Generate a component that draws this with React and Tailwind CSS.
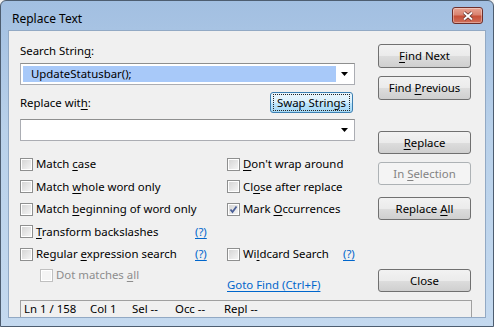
import React from "react";

const font = { fontFamily: '"Noto Sans", "Segoe UI", sans-serif' };

const U = ({ children }) => <span className="underline underline-offset-2">{children}</span>;

const Button = ({ children, className = "", disabled, focused }) => {
  let look =
    "border-[#707070] text-black bg-[linear-gradient(#f2f2f2_0%,#ebebeb_50%,#dddddd_51%,#cfcfcf_100%)]";
  if (disabled) look = "border-[#adb2b5] text-[#838383] bg-[#f4f4f4]";
  if (focused)
    look =
      "border-[#3c7fb1] text-black bg-[linear-gradient(#eaf6fd_0%,#d9f0fc_50%,#bee6fd_51%,#a7d9f5_100%)]";
  return (
    <div
      className={`flex items-center justify-center rounded-[3px] border text-[11.4px] ${look} ${className}`}
    >
      {focused ? (
        <span className="border border-dotted border-[#222] px-[3px] leading-[15px]">{children}</span>
      ) : (
        <span>{children}</span>
      )}
    </div>
  );
};

const Combo = ({ value }) => (
  <div className="flex h-[22px] items-center border border-[#abadb3] border-t-[#8e8f8f] bg-white pl-[2px] pr-[6px]">
    <div className={`flex h-[16px] flex-1 items-center pl-[8px] text-[11.4px] ${value ? "bg-[#a8c9f9]" : ""}`}>
      {value}
    </div>
    <svg width="7" height="4" viewBox="0 0 7 4" className="ml-[5px]">
      <path d="M0 0h7L3.5 4z" fill="#000" />
    </svg>
  </div>
);

const Check = ({ checked, disabled }) => (
  <div
    className={`h-[13px] w-[13px] shrink-0 border p-[1px] ${
      disabled ? "border-[#c0c0c0] bg-white" : "border-[#8e8f8f] bg-white"
    }`}
  >
    <div
      className={`relative h-full w-full ${
        disabled ? "bg-[#f4f4f4]" : "bg-[linear-gradient(135deg,#d6d6d6,#f4f4f4)]"
      }`}
    >
      {checked && (
        <svg width="9" height="9" viewBox="0 0 9 9" className="absolute left-0 top-0">
          <path d="M1.5 4.5L3.5 7L7.5 1.5" fill="none" stroke="#4a5f97" strokeWidth="1.8" />
        </svg>
      )}
    </div>
  </div>
);

const Option = ({ children, checked, disabled, className = "" }) => (
  <div className={`flex items-center gap-[3px] ${className}`}>
    <Check checked={checked} disabled={disabled} />
    <span className={`text-[11.4px] leading-[16px] ${disabled ? "text-[#8d8d8d]" : "text-black"}`}>{children}</span>
  </div>
);

const Help = ({ className = "" }) => (
  <span className={`text-[11.4px] text-[#0066cc] underline underline-offset-2 ${className}`}>(?)</span>
);

export default function App() {
  return (
    <div style={font} className="h-[327px] w-[494px] overflow-hidden bg-[#f0f0f0]">
      <div className="flex h-full flex-col rounded-t-[6px] border border-[#4d5d70] bg-[linear-gradient(#a2bfe1,#b9d1ea_40%,#c4d9ef)]">
        <div className="flex h-[29px] shrink-0 items-center justify-between pl-[11px] pr-[10px]">
          <span className="mt-[7px] text-[12px] text-black">Replace Text</span>
          <div className="flex h-[17px] w-[31px] items-center justify-center rounded-[3px] border border-[#6d2f2b] bg-[linear-gradient(#e8a493,#d98370_45%,#c75038_55%,#d0705c)] shadow-[inset_0_0_0_1px_rgba(255,255,255,0.35)]">
            <svg width="12" height="10" viewBox="0 0 12 10">
              <path d="M2 1.5L10 8.5M10 1.5L2 8.5" stroke="#5a2a25" strokeWidth="3.4" />
              <path d="M2 1.5L10 8.5M10 1.5L2 8.5" stroke="#fff" strokeWidth="2" />
            </svg>
          </div>
        </div>

        <div className="mx-[7px] flex flex-1 flex-col border border-[#92a9c4] bg-[#f0f0f0] pl-[11px] pr-[13px]">
          <div className="flex flex-1">
            <div className="w-[335px]">
              <div className="mt-[12px] text-[11.4px] leading-[16px]">
                Search Strin<U>g</U>:
              </div>
              <div className="mt-[4px]">
                <Combo value="UpdateStatusbar();" />
              </div>
              <div className="flex items-start justify-between">
                <div className="mt-[10px] text-[11.4px] leading-[16px]">
                  Replace wit<U>h</U>:
                </div>
                <Button focused className="mr-[2px] mt-[7px] h-[21px] w-[83px]">
                  Swap Strings
                </Button>
              </div>
              <div className="mt-[6px]">
                <Combo />
              </div>

              <div className="mt-[12px] grid grid-cols-[207px_1fr]">
                <div className="flex h-[22px] items-center">
                  <Option>
                    Match <U>c</U>ase
                  </Option>
                </div>
                <div className="flex h-[22px] items-center">
                  <Option>
                    <U>D</U>on't wrap around
                  </Option>
                </div>
                <div className="flex h-[23px] items-center">
                  <Option>
                    Match <U>w</U>hole word only
                  </Option>
                </div>
                <div className="flex h-[23px] items-center">
                  <Option>
                    Cl<U>o</U>se after replace
                  </Option>
                </div>
                <div className="flex h-[22px] items-center">
                  <Option>
                    Match <U>b</U>eginning of word only
                  </Option>
                </div>
                <div className="flex h-[22px] items-center">
                  <Option checked>
                    Mark <U>O</U>ccurrences
                  </Option>
                </div>
                <div className="flex h-[23px] items-center">
                  <Option className="w-[175px]">
                    <U>T</U>ransform backslashes
                  </Option>
                  <Help />
                </div>
                <div className="h-[23px]" />
                <div className="flex h-[22px] items-center">
                  <Option className="w-[175px]">
                    Regular <U>e</U>xpression search
                  </Option>
                  <Help />
                </div>
                <div className="flex h-[22px] items-center">
                  <Option className="w-[116px]">
                    Wi<U>l</U>dcard Search
                  </Option>
                  <Help />
                </div>
                <div className="flex h-[20px] items-center pl-[20px]">
                  <Option disabled>
                    Dot matches <U>a</U>ll
                  </Option>
                </div>
                <div className="flex h-[20px] items-start">
                  <span className="mt-[12px] text-[11.4px] leading-[16px] text-[#0066cc] underline underline-offset-2">
                    Goto Find (Ctrl+F)
                  </span>
                </div>
              </div>
            </div>

            <div className="ml-auto mr-[1px] flex w-[93px] flex-col pt-[13px]">
              <Button className="h-[24px]">
                <U>F</U>ind Next
              </Button>
              <Button className="mt-[8px] h-[24px]">
                Find <U>P</U>revious
              </Button>
              <Button className="mt-[31px] h-[23px]">
                <U>R</U>eplace
              </Button>
              <Button disabled className="mt-[8px] h-[23px]">
                In <U>S</U>election
              </Button>
              <Button className="mt-[12px] h-[23px]">
                Replace <U>A</U>ll
              </Button>
              <Button className="mt-[49px] h-[23px]">Close</Button>
            </div>
          </div>

          <div className="flex h-[17px] shrink-0 items-center border border-b-0 border-[#a0a0a0] pl-[3px] text-[11.4px] leading-[16px]">
            <span className="w-[66px]">Ln 1 / 158</span>
            <span className="w-[42px]">Col 1</span>
            <span className="w-[43px]">Sel --</span>
            <span className="w-[49px]">Occ --</span>
            <span>Repl --</span>
          </div>
        </div>
        <div className="h-[8px] shrink-0" />
      </div>
    </div>
  );
}
